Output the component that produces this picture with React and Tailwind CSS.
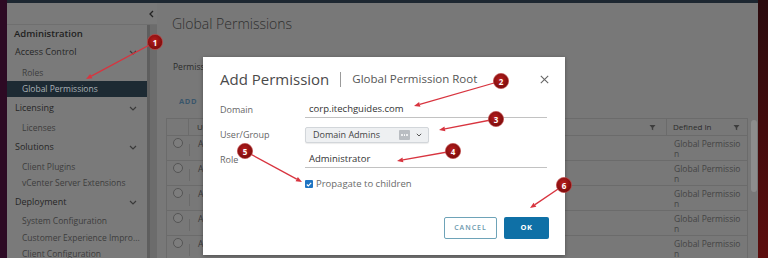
import React from "react";

const ChevronDown = () => (
  <svg width="8" height="5" viewBox="0 0 8 5" className="shrink-0">
    <path d="M1 1l3 3 3-3" stroke="#3a3a3a" strokeWidth="1.2" fill="none" />
  </svg>
);

const Filter = () => (
  <svg width="7" height="7" viewBox="0 0 7 7">
    <path d="M0.5 1h6L4.2 3.8V6.2L2.8 5.5V3.8z" fill="#3d3d3d" />
  </svg>
);

function Arrow({ from, to, n }) {
  const [x1, y1] = from;
  const [x2, y2] = to;
  const dx = x2 - x1;
  const dy = y2 - y1;
  const len = Math.hypot(dx, dy);
  const ux = dx / len;
  const uy = dy / len;
  const hl = 6;
  const hw = 2.4;
  const bx = x2 - ux * hl;
  const by = y2 - uy * hl;
  const pts = `${x2},${y2} ${bx - uy * hw},${by + ux * hw} ${bx + uy * hw},${by - ux * hw}`;
  return (
    <g>
      <line x1={x1} y1={y1} x2={bx} y2={by} stroke="#d8343f" strokeWidth="1.3" />
      <polygon points={pts} fill="#d8343f" />
      <circle cx={x1} cy={y1} r="7.6" fill="url(#badge)" stroke="#c04848" strokeWidth="0.7" />
      <text
        x={x1}
        y={y1 + 0.3}
        fill="#ffffff"
        fontSize="8"
        fontWeight="700"
        fontFamily="'Open Sans', 'Liberation Sans', sans-serif"
        textAnchor="middle"
        dominantBaseline="central"
      >
        {n}
      </text>
    </g>
  );
}

const SubItem = ({ children, h, active }) => (
  <div
    className={`${h} shrink-0 flex items-center pl-[15px] whitespace-nowrap text-[8.5px] ${
      active ? "bg-[#1d2a33] text-[#aab1b6]" : "text-[#3d3d3d]"
    }`}
  >
    {children}
  </div>
);

const GroupItem = ({ children, h }) => (
  <div className={`${h} shrink-0 flex items-center justify-between pl-[8px] pr-[10px] text-[9px] font-medium text-[#262626] whitespace-nowrap`}>
    <span>{children}</span>
    <ChevronDown />
  </div>
);

const rows = ["Administrators", "Administrators", "Auditors", "AutoUpdate", "Administrators"];

export default function App() {
  return (
    <div className="relative w-[768px] h-[258px] overflow-hidden flex font-['Open_Sans','Liberation_Sans',sans-serif]">
      <div className="w-[7px] h-full shrink-0 bg-[#2d0a24]" />
      <div className="w-[751px] h-full shrink-0 flex flex-col">
        <div className="h-[3px] shrink-0 bg-[#1d2731]" />
        <div className="flex flex-1 min-h-0">
          {/* Sidebar */}
          <aside className="w-[150px] shrink-0 flex flex-col bg-[#7a7a7a]">
            <div className="h-[22px] shrink-0 flex items-center justify-end pr-[3px] border-b border-[#6f6f6f]">
              <svg width="5" height="8" viewBox="0 0 5 8">
                <path d="M4 1L1 4l3 3" stroke="#222" strokeWidth="1.3" fill="none" />
              </svg>
            </div>
            <div className="flex flex-1 min-h-0">
              <nav className="w-[140px] shrink-0 flex flex-col overflow-hidden">
                <div className="h-[18px] shrink-0 flex items-center pl-[7px] text-[9.5px] font-semibold text-[#1f1f1f]">Administration</div>
                <GroupItem h="h-[18px]">Access Control</GroupItem>
                <div className="h-[4px] shrink-0" />
                <SubItem h="h-[16px]">Roles</SubItem>
                <SubItem h="h-[16px]" active>Global Permissions</SubItem>
                <GroupItem h="h-[22px]">Licensing</GroupItem>
                <SubItem h="h-[18px]">Licenses</SubItem>
                <GroupItem h="h-[20px]">Solutions</GroupItem>
                <div className="h-[2px] shrink-0" />
                <SubItem h="h-[16px]">Client Plugins</SubItem>
                <SubItem h="h-[16px]">vCenter Server Extensions</SubItem>
                <GroupItem h="h-[22px]">Deployment</GroupItem>
                <SubItem h="h-[17px]">System Configuration</SubItem>
                <SubItem h="h-[16px]">Customer Experience Impro...</SubItem>
                <SubItem h="h-[16px]">Client Configuration</SubItem>
              </nav>
              <div className="w-[10px] shrink-0 border-l-[3px] border-[#5e5e5e] bg-[#6c6c6c]" />
            </div>
          </aside>

          {/* Main */}
          <main className="flex-1 min-h-0 overflow-hidden flex flex-col pl-[9px] bg-[#787878]">
            <div className="h-[40px] shrink-0 flex items-center pl-[6px] text-[14px] font-light text-[#2e2e2e]">Global Permissions</div>
            <div className="h-[48px] shrink-0 flex items-center pl-[7px] text-[8.5px] text-[#2b2b2b]">Permissions</div>
            <div className="h-[22px] shrink-0 flex items-center pl-[13px] text-[7.5px] font-bold tracking-[0.6px] text-[#3a566b]">ADD</div>
            <div className="mt-[5px] shrink-0 flex items-start">
              <div className="w-[582px] shrink-0 border border-b-0 border-[#6b6b6b] flex flex-col">
                <div className="h-[17px] shrink-0 flex border-b border-[#6b6b6b] text-[8px] text-[#2b2b2b]">
                  <div className="w-[22px] border-r border-[#6b6b6b]" />
                  <div className="w-[232px] flex items-center pl-[8px]">User/Group</div>
                  <div className="flex-1 flex items-center justify-end pr-[10px] border-r border-[#6b6b6b]">
                    <Filter />
                  </div>
                  <div className="w-[80px] flex items-center justify-between pl-[6px] pr-[7px]">
                    <span>Defined In</span>
                    <Filter />
                  </div>
                </div>
                {rows.map((r, i) => (
                  <div key={i} className="h-[25px] shrink-0 flex border-b border-[#6b6b6b] text-[8.5px] text-[#3a3a3a]">
                    <div className="w-[22px] flex justify-center pt-[2px]">
                      <div className="w-[10px] h-[10px] rounded-full border border-[#555555] bg-[#7d7d7d]" />
                    </div>
                    <div className="w-[1px] h-[12px] mt-[8px] bg-[#6a6a6a]" />
                    <div className="w-[231px] pl-[8px] pt-[3px] leading-[10px]">{r}</div>
                    <div className="flex-1" />
                    <div className="w-[80px] pl-[7px] pt-[3px] leading-[9.5px] text-[#444]">
                      Global Permissio
                      <br />n
                    </div>
                  </div>
                ))}
              </div>
              <div className="ml-[3px] mt-[2px] w-[6px] h-[72px] shrink-0 rounded-[3px] bg-[#8d8d8d]" />
            </div>
          </main>
        </div>
      </div>
      <div className="w-[10px] h-full shrink-0 bg-gradient-to-b from-[#2a0a0d] via-[#430b0c] to-[#5c0d0d]" />

      {/* Modal */}
      <div className="absolute left-[203px] top-[57px] w-[362px] h-[198px] bg-white shadow-[0_1px_4px_rgba(0,0,0,0.35)] flex flex-col pl-[17px] pr-[16px] pt-[7px]">
        <div className="h-[30px] shrink-0 flex items-center">
          <span className="text-[15px] text-[#4a4a4a]">Add Permission</span>
          <span className="mx-[11px] w-[1px] h-[15px] bg-[#9a9a9a]" />
          <span className="text-[11.5px] text-[#565656]">Global Permission Root</span>
          <svg className="ml-auto" width="9" height="9" viewBox="0 0 9 9">
            <path d="M0.8 0.8l7.4 7.4M8.2 0.8L0.8 8.2" stroke="#666" strokeWidth="1.1" />
          </svg>
        </div>
        <div className="mt-[7px] h-[17px] shrink-0 flex">
          <div className="w-[85px] flex items-center text-[9px] text-[#666]">Domain</div>
          <div className="flex-1 mr-[2px] border-b border-[#c2c2c2] flex items-center pl-[4px] text-[9.5px] text-[#333]">corp.itechguides.com</div>
        </div>
        <div className="mt-[9px] h-[16px] shrink-0 flex">
          <div className="w-[85px] flex items-center text-[9px] text-[#666]">User/Group</div>
          <div className="w-[124px] flex items-center pl-[7px] bg-[#eef0f2] border border-[#d2d6da] rounded-[2px] shadow-[0_1px_1px_rgba(0,0,0,0.08)] text-[9px] text-[#444]">
            <span>Domain Admins</span>
            <span className="ml-auto w-[11px] h-[10px] rounded-[1px] bg-[#b9bdc2] flex items-center justify-center gap-[1px]">
              <span className="w-[1.5px] h-[1.5px] bg-white rounded-full" />
              <span className="w-[1.5px] h-[1.5px] bg-white rounded-full" />
              <span className="w-[1.5px] h-[1.5px] bg-white rounded-full" />
            </span>
            <span className="mx-[6px] flex">
              <svg width="6" height="4" viewBox="0 0 6 4">
                <path d="M0.8 0.8L3 3l2.2-2.2" stroke="#555" strokeWidth="1" fill="none" />
              </svg>
            </span>
          </div>
        </div>
        <div className="mt-[8px] h-[17px] shrink-0 flex">
          <div className="w-[85px] flex items-center text-[9px] text-[#666]">Role</div>
          <div className="flex-1 mr-[2px] border-b border-[#c2c2c2] flex items-center pl-[4px] text-[9.5px] text-[#333]">Administrator</div>
        </div>
        <div className="mt-[11px] h-[10px] shrink-0 flex items-center pl-[85px] gap-[3px]">
          <span className="w-[8px] h-[8px] rounded-[1px] bg-[#1f74c2] flex items-center justify-center">
            <svg width="6" height="5" viewBox="0 0 6 5">
              <path d="M0.8 2.5L2.3 4L5.2 0.9" stroke="#fff" strokeWidth="1.1" fill="none" />
            </svg>
          </span>
          <span className="text-[9.5px] text-[#6a6a6a]">Propagate to children</span>
        </div>
        <div className="mt-auto mb-[16px] shrink-0 flex justify-end gap-[7px]">
          <button className="w-[53px] h-[22px] border border-[#6ea3b8] rounded-[2px] text-[7px] font-semibold tracking-[1px] text-[#6a98ad] bg-white">CANCEL</button>
          <button className="w-[45px] h-[22px] rounded-[2px] bg-[#0f70a6] text-[7.5px] font-bold tracking-[0.6px] text-white">OK</button>
        </div>
      </div>

      {/* Annotations */}
      <svg className="absolute inset-0 pointer-events-none" width="768" height="258" viewBox="0 0 768 258">
        <defs>
          <radialGradient id="badge" cx="45%" cy="40%" r="60%">
            <stop offset="0%" stopColor="#b81e1e" />
            <stop offset="100%" stopColor="#7a0b0b" />
          </radialGradient>
        </defs>
        <Arrow from={[155, 42]} to={[86, 79]} n="1" />
        <Arrow from={[501, 81]} to={[414, 106]} n="2" />
        <Arrow from={[496, 119]} to={[439, 130]} n="3" />
        <Arrow from={[453, 151]} to={[397, 161]} n="4" />
        <Arrow from={[245, 151]} to={[302, 182]} n="5" />
        <Arrow from={[564, 185]} to={[530, 208]} n="6" />
      </svg>
    </div>
  );
}
